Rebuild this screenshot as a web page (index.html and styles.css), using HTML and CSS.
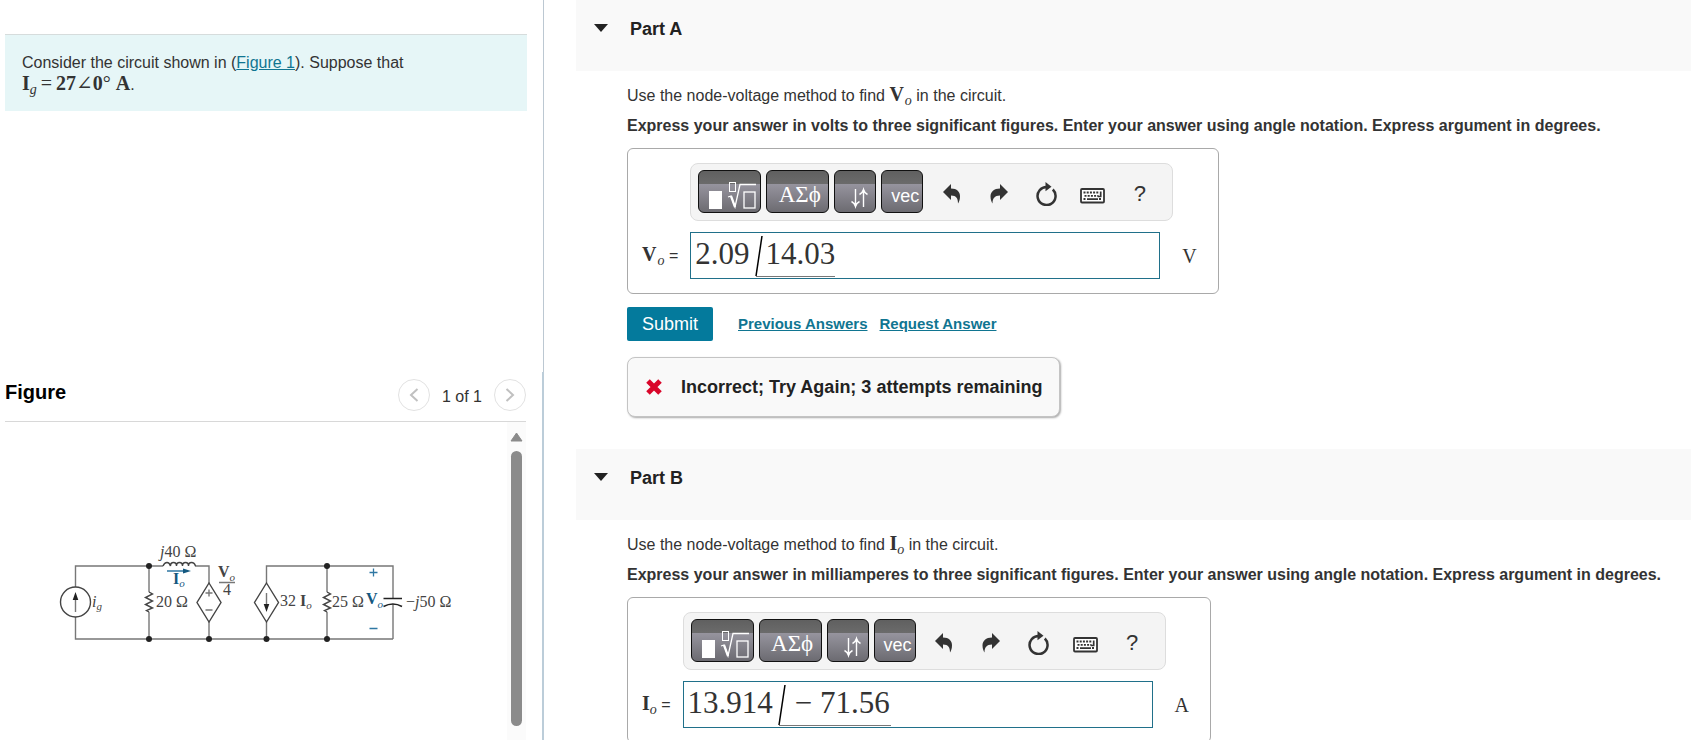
FILE: index.html
```html
<!DOCTYPE html>
<html lang="en">
<head>
<meta charset="utf-8">
<title>Node-voltage method</title>
<link rel="stylesheet" href="styles.css">
</head>
<body>
<svg class="defs" aria-hidden="true">
  <symbol id="i-template" viewBox="0 0 62 43">
    <rect x="11" y="21" width="13" height="18" fill="#fff"/>
    <rect x="31.500" y="12.500" width="6" height="9" fill="none" stroke="#fff"/>
    <path d="M30 27l3-1 4 11 5-22.500h16" fill="none" stroke="#fff" stroke-width="1.300"/>
    <path d="M33 26l4 11" stroke="#fff" stroke-width="2.200"/>
    <rect x="46" y="22" width="11" height="16" fill="none" stroke="#fff" stroke-width="1.300"/>
  </symbol>
  <symbol id="i-arrows" viewBox="0 0 42 43">
    <path d="M21.500 19v17M17.500 31.500q3 1.500 4 5q1-3.500 4-5M29.500 37V20M25.500 24.500q3-1.500 4-5q1 3.500 4 5" fill="none" stroke="#fff" stroke-width="1.400"/>
  </symbol>
  <symbol id="i-undo" viewBox="0 0 18 20">
    <path d="M0 8L8 0v4.500c6 0 9 3.500 9 8 0 3-1 5.500-2 7 0-5-1.500-8-7-8V16z" fill="#333"/>
  </symbol>
  <symbol id="i-redo" viewBox="0 0 18 20">
    <path d="M18 8L10 0v4.500c-6 0-9.500 3.500-9.500 8 0 3 1 5.500 2 7 0-5 2-8 7.500-8V16z" fill="#333"/>
  </symbol>
  <symbol id="i-reset" viewBox="0 0 22 24">
    <path d="M12 5A9 9 0 1 0 17.800 7.500" fill="none" stroke="#333" stroke-width="2.500"/>
    <path d="M10.500 0l6 4.800-6 4.500z" fill="#333"/>
  </symbol>
  <symbol id="i-keys" viewBox="0 0 25 16">
    <rect x="1" y="1" width="23" height="13.500" rx="1" fill="#fff" stroke="#333" stroke-width="1.800"/>
    <path d="M3.500 4.500h15M4.500 7.800h14M3.500 11h2M19 11h2.500" stroke="#333" stroke-width="1.800" stroke-dasharray="2 1.200" fill="none"/>
    <path d="M7 11.200h11M20.700 3.500v5h-3" stroke="#333" stroke-width="1.700" fill="none"/>
  </symbol>
</svg>

<aside class="side">
  <section class="intro">
    <div class="prompt">Consider the circuit shown in (<a href="#figure">Figure 1</a>). Suppose that<br><span class="math"><b>I</b><i class="sub">g</i><span class="rel">=</span><b>27</b>∠<b>0</b>° <b>A</b></span>.</div>
  </section>
  <section class="figure" id="figure">
    <header class="figure-head">
      <h2>Figure</h2>
      <nav class="pager" aria-label="Figures">
        <button class="round" type="button" aria-label="Previous figure"><svg width="10" height="16" viewBox="0 0 10 16"><path d="M8.500 2L2 8l6.500 6"/></svg></button>
        <span>1 of 1</span>
        <button class="round" type="button" aria-label="Next figure"><svg width="10" height="16" viewBox="0 0 10 16"><path d="M1.500 2L8 8l-6.500 6"/></svg></button>
      </nav>
    </header>
    <div class="figure-body">
      <svg class="circuit" width="405" height="115" viewBox="55 540 405 115" role="img" aria-label="Circuit diagram">
        <g class="wire">
          <path d="M75.500 587V566H163M195 566h14v17M75.500 617v22H393M149 566v26M149 612v27M209 622v17M266.500 583v-17H393v32M266.500 622v17M327 566v26M327 612v27M393 604v35"/>
          <path class="coil" d="M163 566q1.500-3.500 4-3.500t3.500 3.500q0-3.500 3-3.500t3 3.500q0-3.500 3-3.500t3 3.500q0-3.500 3-3.500t3 3.500q0-3.500 3-3.500t4 3.500"/>
          <path class="coil" d="M149 592l3.500 2-7 3.500 7 3.500-7 3.500 7 3.500-6 2.500 2.500 1.500M327 592l3.500 2-7 3.500 7 3.500-7 3.500 7 3.500-6 2.500 2.500 1.500"/>
          <circle class="coil" cx="75.500" cy="602" r="15"/>
          <path class="coil" d="M209 583l12 19.500-12 19.500-12-19.500zM266.500 583l12 19.500-12 19.500-12-19.500z"/>
          <path d="M75.500 612v-15M266.500 593v13M205.500 593h7M209 589.500v7M205.500 610h7M219 582.500h16"/>
          <path class="plate" d="M383.500 598.500h18.500M383.500 606.500q9.500-5 18.500 0"/>
        </g>
        <path class="solid" d="M75.500 592l2.800 8h-5.600zM266.500 612l2.800-8h-5.600z"/>
        <g class="solid"><circle cx="149" cy="566" r="3"/><circle cx="149" cy="639" r="3"/><circle cx="209" cy="639" r="3"/><circle cx="266.500" cy="639" r="3"/><circle cx="327" cy="566" r="3"/><circle cx="327" cy="639" r="3"/></g>
        <path class="blue-line" d="M167 571h18M369.500 572.500h8M373.500 568.500v8M369.500 628.500h8"/>
        <path class="blue" d="M191 571l-8-2.500v5z"/>
        <g class="label">
          <text x="160" y="557"><tspan font-style="italic">j</tspan>40 Ω</text>
          <text x="156" y="607">20 Ω</text>
          <text x="92" y="607" font-style="italic">i<tspan class="tiny" dy="3">g</tspan></text>
          <text x="218" y="577"><tspan font-weight="bold">V</tspan><tspan class="tiny" dy="4">o</tspan></text>
          <text x="223" y="595">4</text>
          <text x="280" y="606">32 <tspan font-weight="bold">I</tspan><tspan class="tiny" dy="3">o</tspan></text>
          <text x="332" y="607">25 Ω</text>
          <text x="406" y="607">−<tspan font-style="italic">j</tspan>50 Ω</text>
          <text class="blue" x="173" y="584"><tspan font-weight="bold">I</tspan><tspan class="tiny" dy="3">o</tspan></text>
          <text class="blue" x="366" y="604"><tspan font-weight="bold">V</tspan><tspan class="tiny" dy="4">o</tspan></text>
        </g>
      </svg>
      <div class="scroll" aria-hidden="true"><svg width="13" height="10" viewBox="0 0 13 10"><path d="M6.500 1L12 9H1z"/></svg><span></span></div>
    </div>
  </section>
</aside>

<main class="parts">
  <section class="part">
    <header class="part-head"><svg width="14" height="8" viewBox="0 0 14 8"><path d="M0 0h14L7 8z"/></svg><h2>Part A</h2></header>
    <div class="part-body">
      <p class="ask">Use the node-voltage method to find <span class="math"><b class="vee">V</b><i class="sub">o</i></span> in the circuit.</p>
      <p class="how">Express your answer in volts to three significant figures. Enter your answer using angle notation. Express argument in degrees.</p>
      <div class="answer">
        <div class="tools" role="toolbar" aria-label="Math tools">
          <button class="key wide" type="button" aria-label="Templates"><svg width="62" height="43"><use href="#i-template"/></svg></button>
          <button class="key wide greek" type="button">ΑΣϕ</button>
          <button class="key" type="button" aria-label="Arrows"><svg width="42" height="43"><use href="#i-arrows"/></svg></button>
          <button class="key vec" type="button">vec</button>
          <span class="actions">
            <button type="button" aria-label="Undo"><svg width="18" height="20"><use href="#i-undo"/></svg></button>
            <button type="button" aria-label="Redo"><svg width="18" height="20"><use href="#i-redo"/></svg></button>
            <button type="button" aria-label="Reset"><svg width="22" height="24"><use href="#i-reset"/></svg></button>
            <button class="low" type="button" aria-label="Keyboard shortcuts"><svg width="25" height="16"><use href="#i-keys"/></svg></button>
            <button class="help" type="button">?</button>
          </span>
        </div>
        <label class="name" for="a-mag"><span class="math"><b class="vee">V</b><i class="sub">o</i></span> =</label>
        <div class="field">
          <input id="a-mag" type="text" value="2.09" style="width:3.5ch">
          <svg class="slash" width="8" height="40" viewBox="0 0 8 40"><path d="M7 0L1 40"/></svg>
          <input class="angle" type="text" value="14.03" aria-label="Angle" style="width:4.5ch">
        </div>
        <span class="unit">V</span>
      </div>
      <div class="submit-row">
        <button class="submit" type="button">Submit</button>
        <a href="#previous">Previous Answers</a>
        <a href="#request">Request Answer</a>
      </div>
      <div class="feedback" role="status"><svg width="18" height="18" viewBox="0 0 18 18"><path d="M3 3l12 12M15 3L3 15"/></svg><span>Incorrect; Try Again; 3 attempts remaining</span></div>
    </div>
  </section>

  <section class="part">
    <header class="part-head"><svg width="14" height="8" viewBox="0 0 14 8"><path d="M0 0h14L7 8z"/></svg><h2>Part B</h2></header>
    <div class="part-body">
      <p class="ask">Use the node-voltage method to find <span class="math"><b>I</b><i class="sub">o</i></span> in the circuit.</p>
      <p class="how">Express your answer in milliamperes to three significant figures. Enter your answer using angle notation. Express argument in degrees.</p>
      <div class="answer">
        <div class="tools" role="toolbar" aria-label="Math tools">
          <button class="key wide" type="button" aria-label="Templates"><svg width="62" height="43"><use href="#i-template"/></svg></button>
          <button class="key wide greek" type="button">ΑΣϕ</button>
          <button class="key" type="button" aria-label="Arrows"><svg width="42" height="43"><use href="#i-arrows"/></svg></button>
          <button class="key vec" type="button">vec</button>
          <span class="actions">
            <button type="button" aria-label="Undo"><svg width="18" height="20"><use href="#i-undo"/></svg></button>
            <button type="button" aria-label="Redo"><svg width="18" height="20"><use href="#i-redo"/></svg></button>
            <button type="button" aria-label="Reset"><svg width="22" height="24"><use href="#i-reset"/></svg></button>
            <button class="low" type="button" aria-label="Keyboard shortcuts"><svg width="25" height="16"><use href="#i-keys"/></svg></button>
            <button class="help" type="button">?</button>
          </span>
        </div>
        <label class="name" for="b-mag"><span class="math"><b>I</b><i class="sub">o</i></span> =</label>
        <div class="field">
          <input id="b-mag" type="text" value="13.914" style="width:5.5ch">
          <svg class="slash" width="8" height="40" viewBox="0 0 8 40"><path d="M7 0L1 40"/></svg>
          <input class="angle signed" type="text" value="− 71.56" aria-label="Angle" style="width:6.2ch">
        </div>
        <span class="unit">A</span>
      </div>
    </div>
  </section>
</main>
</body>
</html>
```
FILE: styles.css
```css
* { box-sizing: border-box; }

body {
  margin: 0;
  height: 100vh;
  display: flex;
  overflow: hidden;
  background: #fff;
  color: #333;
  font: 16px/20px "Liberation Sans", Arial, sans-serif;
}

h2, p { margin: 0; }
a { color: #107591; }
button { padding: 0; border: 0; background: none; color: inherit; font: inherit; }
svg { display: block; }
.defs { position: absolute; width: 0; height: 0; }

.math { font-family: "Liberation Serif", "DejaVu Serif", serif; font-size: 20px; line-height: 1; }
.sub { font-size: 14px; vertical-align: -4px; line-height: 1; }
.vee { margin-right: 1px; }

/* Left column */
.side { flex: 0 0 544px; display: flex; flex-direction: column; }
.intro {
  flex: 1;
  padding: 34px 16px 0 5px;
  border-right: 1px solid #bcc8d2;
}
.prompt {
  height: 77px;
  padding: 18px 17px 0;
  background: #e6f6f7;
  border-top: 1px solid #d6dcdc;
}
.rel { margin: 0 4px; }

.figure {
  flex: 0 0 368px;
  display: flex;
  flex-direction: column;
  padding: 0 16px 0 5px;
  border-right: 2px solid #bccdd9;
}
.figure-head {
  display: flex;
  justify-content: space-between;
  height: 50px;
  border-bottom: 1px solid #d8d8d8;
}
.figure-head h2 { padding-top: 8px; color: #000; font-size: 20px; line-height: 24px; }
.pager { display: flex; align-items: center; gap: 12px; height: 46px; }
.pager span { padding-top: 4px; }
.round {
  display: grid;
  place-items: center;
  width: 32px;
  height: 32px;
  border: 1px solid #e2e2e2;
  border-radius: 50%;
}
.round path { fill: none; stroke: #c0c0c0; stroke-width: 2; }
.figure-body { flex: 1; display: flex; justify-content: space-between; }
.circuit { margin: 118px 0 0 50px; }
.scroll {
  display: flex;
  flex-direction: column;
  align-items: center;
  gap: 9px;
  width: 19px;
  padding: 10px 0 14px;
  background: #fbfbfb;
}
.scroll path { fill: #8b8b8b; stroke: #8b8b8b; stroke-linejoin: round; }
.scroll span { flex: 1; width: 11px; border-radius: 6px; background: #8b8b8b; }

.wire { fill: none; stroke: #777; stroke-width: 1.4; }
.coil { stroke: #444; }
.plate { stroke: #222; stroke-width: 1.6; }
.solid { fill: #222; }
.blue { fill: #14587f; }
.blue-line { fill: none; stroke: #2f77a3; stroke-width: 1.3; }
.label { font-family: "Liberation Serif", serif; font-size: 16px; fill: #444; }
.label .blue { fill: #14587f; }
.tiny { font-size: 11px; font-style: italic; }

/* Right column */
.parts { flex: 1; min-width: 0; padding-left: 32px; overflow: hidden; }
.part-head {
  display: flex;
  align-items: flex-start;
  gap: 22px;
  height: 71px;
  padding: 18px 18px 0;
  background: #f9f9f9;
  color: #222;
}
.part-head svg { margin-top: 6px; fill: #222; }
.part-head h2 { font-size: 18px; line-height: 22px; }
.part-body { padding: 13px 0 32px 51px; }
.ask { height: 20px; margin-bottom: 12px; white-space: nowrap; }
.how { font-weight: bold; white-space: nowrap; }

.answer {
  display: grid;
  grid-template-columns: auto 470px 1fr;
  row-gap: 11px;
  width: fit-content;
  margin-top: 12px;
  padding: 14px 21px 14px 14px;
  border: 1px solid #a9a9a9;
  border-radius: 6px;
}
.tools {
  grid-column: 2 / 4;
  display: flex;
  align-items: flex-start;
  gap: 5px;
  width: 483px;
  height: 58px;
  padding: 6px 0 0 7px;
  border: 1px solid #ddd;
  border-radius: 8px;
  background: #f4f4f4;
}
.key {
  flex: none;
  width: 42px;
  height: 43px;
  overflow: hidden;
  border: 1px solid #111;
  border-radius: 6px;
  background: linear-gradient(#606060, #6b6b6b 32%, #96949e 32%, #6c6b71);
  color: #fff;
}
.key svg { margin: -1px; }
.wide { width: 63px; }
.greek { padding: 6px 0 0 4px; font: 23px/24px "Liberation Serif", serif; }
.vec { padding: 9px 0 0 6px; font-size: 18px; }
.actions { display: grid; grid-template-columns: repeat(5, 47px); place-items: center; height: 47px; }
.low { padding-top: 4px; }
.help { font-size: 22px; line-height: 24px; }

.name { align-self: center; padding-right: 12px; font-size: 16px; white-space: nowrap; }
.field {
  display: flex;
  align-items: flex-start;
  height: 47px;
  padding: 3px 4px;
  border: 1px solid #20708a;
  font: 31px/36px "Liberation Serif", serif;
}
.field input {
  box-sizing: content-box;
  height: 36px;
  padding: 0 0 4px;
  border: 0;
  outline: 0;
  background: none;
  color: #333;
  font: inherit;
}
.slash { flex: none; margin-left: 5px; fill: none; stroke: #000; stroke-width: 1.5; }
.field .angle { margin-left: -7px; padding-left: 10px; border-bottom: 1px solid #777; }
.field .signed { padding-left: 16px; }
.unit { align-self: center; padding-left: 22px; font: 20px/24px "Liberation Serif", serif; }

.submit-row { display: flex; align-items: center; margin-top: 13px; font-size: 15px; font-weight: bold; }
.submit-row a + a { margin-left: 12px; }
.submit {
  width: 86px;
  height: 34px;
  margin-right: 25px;
  border-radius: 2px;
  background: #047a9c;
  color: #fff;
  font-size: 18px;
  font-weight: normal;
}
.feedback {
  display: flex;
  align-items: center;
  gap: 18px;
  width: fit-content;
  height: 60px;
  margin-top: 16px;
  padding: 0 17px;
  border: 1px solid #c4c4c4;
  border-radius: 8px;
  background: #f9f9f9;
  box-shadow: 1px 1px 2px #aaa;
  color: #222;
  font-size: 18px;
  font-weight: bold;
}
.feedback path { stroke: #d9062a; stroke-width: 5; }
```
